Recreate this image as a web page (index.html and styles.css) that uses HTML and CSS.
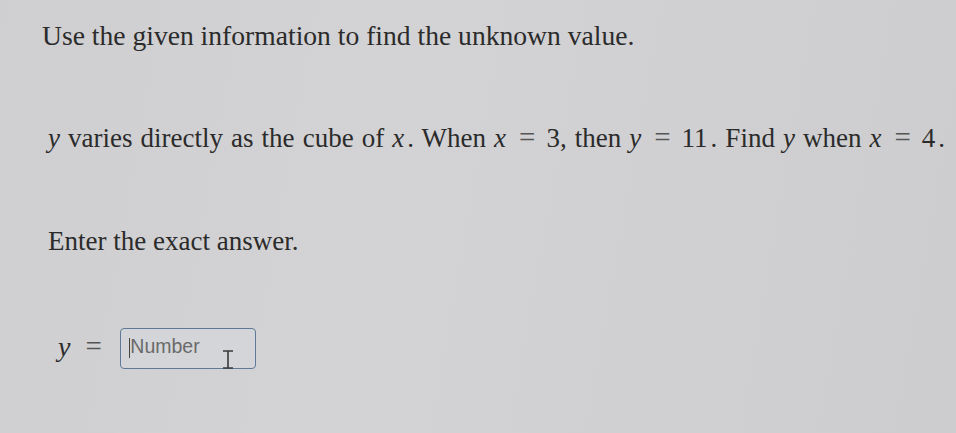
FILE: index.html
```html
<!DOCTYPE html>
<html>
<head>
<meta charset="utf-8">
<link rel="stylesheet" href="styles.css">
</head>
<body>
<div class="page">
  <p class="title">Use the given information to find the unknown value.</p>
  <p class="problem"><span class="mi">y</span> varies directly as the cube of <span class="mi">x</span><span class="mn dot">.</span> When <span class="mi">x</span><span class="mo">=</span><span class="mn">3</span>, then <span class="mi">y</span><span class="mo">=</span><span class="mn">11</span><span class="mn dot">.</span> Find <span class="mi">y</span> when <span class="mi">x</span><span class="mo">=</span><span class="mn">4</span><span class="mn dot">.</span></p>
  <p class="instr">Enter the exact answer.</p>
  <div class="answer">
    <span class="label"><span class="mi">y</span><span class="mo">=</span></span>
    <div class="inputbox">
      <span class="caret"></span><span class="ph">Number</span>
      <svg class="ibeam" width="12" height="19" viewBox="0 0 12 19"><path d="M1 1h10M6 1v17M1 18h10" stroke="#3a3a3a" stroke-width="1.6" fill="none"/></svg>
    </div>
  </div>
</div>
</body>
</html>
```
FILE: styles.css
```css
html, body {
  margin: 0;
  padding: 0;
}
body {
  width: 956px;
  height: 433px;
  overflow: hidden;
  background: linear-gradient(100deg, #cfcfd1 0%, #d3d3d5 40%, #cdcdcf 100%);
  font-family: "Liberation Serif", "Times New Roman", serif;
  color: #2b2b2b;
}
.page {
  padding: 18px 0 0 42px;
}
p {
  margin: 0;
}
.title {
  font-size: 27.6px;
  line-height: 36px;
}
.problem {
  margin-top: 65px;
  margin-left: 6px;
  font-size: 27px;
  line-height: 36px;
  white-space: nowrap;
  word-spacing: 1.3px;
}
.mi {
  font-style: italic;
}
.mo {
  color: #555;
  padding: 0 11px 0 13px;
  font-size: 29px;
}
.dot {
  padding-left: 3px;
}
.instr {
  margin-top: 68px;
  margin-left: 6px;
  font-size: 27px;
  line-height: 34px;
}
.answer {
  margin-top: 70px;
  margin-left: 16px;
  display: flex;
  align-items: center;
  gap: 18px;
}
.label {
  font-size: 28px;
  margin-top: -4px;
}
.label .mo {
  padding: 0 0 0 15px;
}
.inputbox {
  width: 136px;
  height: 41px;
  border: 1.5px solid #5f7a98;
  border-radius: 4px;
  box-sizing: border-box;
  display: flex;
  align-items: center;
  padding-left: 8px;
  position: relative;
  background: #d4d5d8;
}
.caret {
  width: 1.5px;
  height: 20px;
  background: #444;
  margin-top: -2px;
}
.ph {
  font-family: "Liberation Sans", Arial, sans-serif;
  font-size: 19.5px;
  color: #6a6a6a;
  margin-top: -4px;
}
.ibeam {
  position: absolute;
  left: 101px;
  top: 21px;
}
```
